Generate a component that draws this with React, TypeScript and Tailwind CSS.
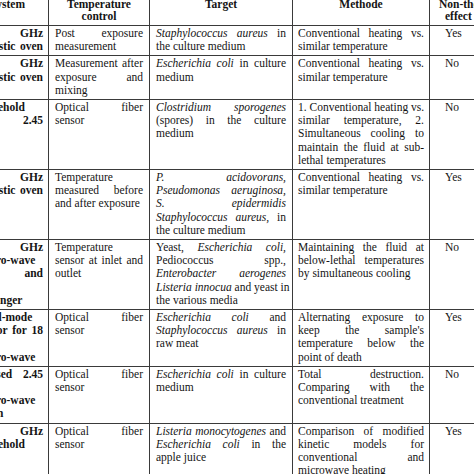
import React from "react";

// one text line of a cell: justified lines are stretched edge to edge
const J = ({ children }: { children: React.ReactNode }) => (
  <div className="whitespace-nowrap text-justify [text-align-last:justify]">{children}</div>
);

const L = ({ children, className = "" }: { children?: React.ReactNode; className?: string }) => (
  <div className={`whitespace-nowrap text-left ${className}`}>{children ?? "\u00a0"}</div>
);

type Row = {
  system: React.ReactNode;
  control: React.ReactNode;
  target: React.ReactNode;
  methode: React.ReactNode;
  effect: string;
};

const rows: Row[] = [
  {
    system: (<><J>2.45 GHz</J><J>domestic oven</J></>),
    control: (<><J>Post exposure</J><L>measurement</L></>),
    target: (<><J><i>Staphylococcus aureus</i> in</J><L>the culture medium</L></>),
    methode: (<><J>Conventional heating vs.</J><L>similar temperature</L></>),
    effect: "Yes",
  },
  {
    system: (<><J>2.45 GHz</J><J>domestic oven</J></>),
    control: (<><J>Measurement after</J><J>exposure and</J><L>mixing</L></>),
    target: (<><J><i>Escherichia coli</i> in culture</J><L>medium</L></>),
    methode: (<><J>Conventional heating vs.</J><L>similar temperature</L></>),
    effect: "No",
  },
  {
    system: (<><L className="pl-[3px]">household</L><J>oven 2.45</J></>),
    control: (<><J>Optical fiber</J><L>sensor</L></>),
    target: (<><J><i>Clostridium sporogenes</i></J><J>(spores) in the culture</J><L>medium</L></>),
    methode: (
      <>
        <L>1. Conventional heating vs.</L>
        <J>similar temperature, 2.</J>
        <J>Simultaneous cooling to</J>
        <J>maintain the fluid at sub-</J>
        <L>lethal temperatures</L>
      </>
    ),
    effect: "No",
  },
  {
    system: (<><J>2.45 GHz</J><J>domestic oven</J></>),
    control: (<><L>Temperature</L><J>measured before</J><L>and after exposure</L></>),
    target: (
      <>
        <J><i>P. acidovorans,</i></J>
        <J><i>Pseudomonas aeruginosa,</i></J>
        <J><i>S. epidermidis</i></J>
        <J><i>Staphylococcus aureus,</i> in</J>
        <L>the culture medium</L>
      </>
    ),
    methode: (<><J>Conventional heating vs.</J><L>similar temperature</L></>),
    effect: "Yes",
  },
  {
    system: (
      <>
        <J>2.45 GHz</J>
        <L className="pl-[6px]">micro-wave</L>
        <J>heat and</J>
        <L>tube</L>
        <L>exchanger</L>
      </>
    ),
    control: (<><L>Temperature</L><J>sensor at inlet and</J><L>outlet</L></>),
    target: (
      <>
        <J>Yeast, <i>Escherichia coli,</i></J>
        <J>Pediococcus spp.,</J>
        <J><i>Enterobacter aerogenes</i></J>
        <J><i>Listeria innocua</i> and yeast in</J>
        <L>the various media</L>
      </>
    ),
    methode: (
      <>
        <J>Maintaining the fluid at</J>
        <J>below-lethal temperatures</J>
        <L>by simultaneous cooling</L>
      </>
    ),
    effect: "No",
  },
  {
    system: (
      <>
        <L className="pl-[6px]">Dual-mode</L>
        <J>reactor for 18</J>
        <L>GHz</L>
        <L className="pl-[6px]">micro-wave</L>
      </>
    ),
    control: (<><J>Optical fiber</J><L>sensor</L></>),
    target: (<><J><i>Escherichia coli</i> and</J><J><i>Staphylococcus aureus</i> in</J><L>raw meat</L></>),
    methode: (
      <>
        <J>Alternating exposure to</J>
        <J>keep the sample's</J>
        <J>temperature below the</J>
        <L>point of death</L>
      </>
    ),
    effect: "Yes",
  },
  {
    system: (
      <>
        <J>Focused 2.45</J>
        <L>GHz</L>
        <L className="pl-[6px]">micro-wave</L>
        <L>design</L>
      </>
    ),
    control: (<><J>Optical fiber</J><L>sensor</L></>),
    target: (<><J><i>Escherichia coli</i> in culture</J><L>medium</L></>),
    methode: (<><J>Total destruction.</J><J>Comparing with the</J><L>conventional treatment</L></>),
    effect: "No",
  },
  {
    system: (<><J>2.45 GHz</J><L className="pl-[3px]">household</L></>),
    control: (<><J>Optical fiber</J><L>sensor</L></>),
    target: (<><J><i>Listeria monocytogenes</i> and</J><J><i>Escherichia coli</i> in the</J><L>apple juice</L></>),
    methode: (
      <>
        <J>Comparison of modified</J>
        <J>kinetic models for</J>
        <J>conventional and</J>
        <L>microwave heating</L>
      </>
    ),
    effect: "Yes",
  },
];

const cell = "border border-[#3a3a3a] align-top overflow-hidden";
const body = `${cell} pt-[1px] pb-[2px]`;
const head = `${cell} pt-[2px] pb-[3px]`;

export default function App() {
  return (
    <div className="w-[474px] h-[474px] overflow-hidden bg-white">
      <table className="table-fixed border-collapse ml-[-34px] mt-[-4px] w-[543px] font-['Liberation_Serif','Times_New_Roman',serif] text-[11.5px] leading-[13.2px] text-[#141414]">
        <colgroup>
          <col className="w-[82px]" />
          <col className="w-[101px]" />
          <col className="w-[143px]" />
          <col className="w-[137px]" />
          <col className="w-[80px]" />
        </colgroup>
        <thead>
          <tr className="font-bold leading-[11.5px]">
            <th className={`${head} px-[5px] text-center`}>System</th>
            <th className={`${head} px-[6px] text-center`}>
              <div>Temperature</div>
              <div>control</div>
            </th>
            <th className={`${head} px-[7px] text-center`}>Target</th>
            <th className={`${head} px-[6px] text-center`}>Methode</th>
            <th className={`${head} pl-[9px] pr-0 text-left`}>
              <div className="whitespace-nowrap">Non-thermal</div>
              <div className="pl-[6px]">effect</div>
            </th>
          </tr>
        </thead>
        <tbody>
          {rows.map((r, i) => (
            <tr key={i}>
              <td className={`${body} px-[5px] font-bold`}>{r.system}</td>
              <td className={`${body} px-[6px]`}>{r.control}</td>
              <td className={`${body} px-[6px]`}>{r.target}</td>
              <td className={`${body} px-[5px]`}>{r.methode}</td>
              <td className={`${body} pl-[15px]`}>{r.effect}</td>
            </tr>
          ))}
        </tbody>
      </table>
    </div>
  );
}
